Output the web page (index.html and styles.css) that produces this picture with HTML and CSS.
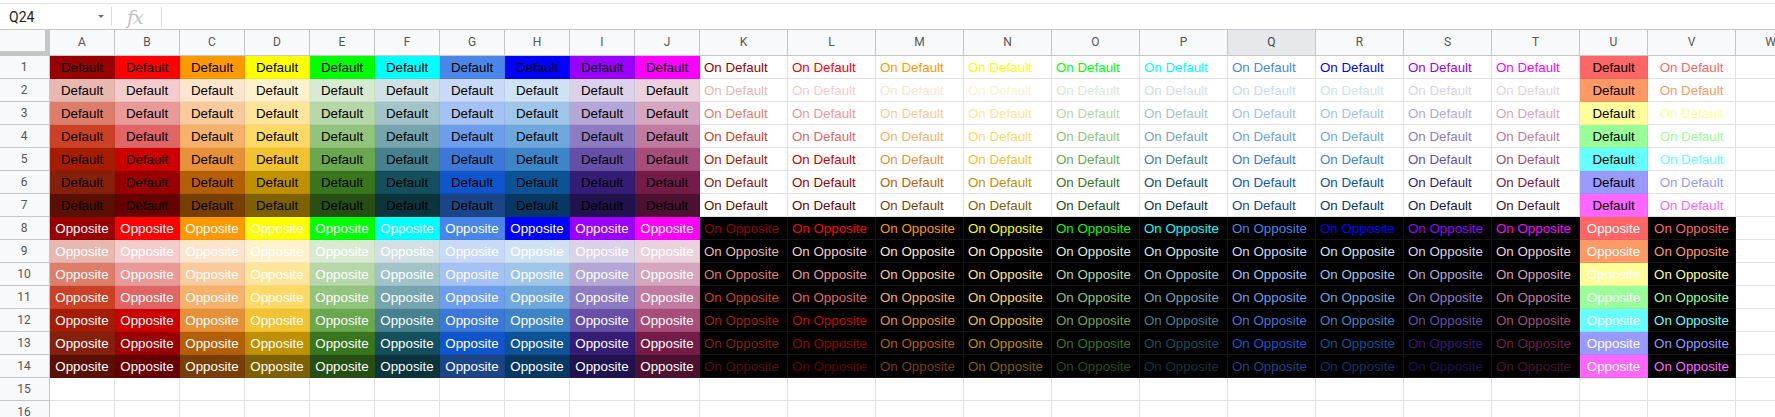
FILE: index.html
```html
<!DOCTYPE html>
<html>
<head>
<meta charset="utf-8">
<link rel="stylesheet" href="styles.css">
</head>
<body>
<div class="toolbar">
  <div class="namebox"><span class="ref">Q24</span><span class="caret"></span></div>
  <div class="sep"></div>
  <div class="fx">fx</div>
  <div class="sep"></div>
</div>
<div class="sheet">
  <div class="corner"></div>
  <div class="ch">A</div><div class="ch">B</div><div class="ch">C</div><div class="ch">D</div><div class="ch">E</div><div class="ch">F</div><div class="ch">G</div><div class="ch">H</div><div class="ch">I</div><div class="ch">J</div>
  <div class="ch">K</div><div class="ch">L</div><div class="ch">M</div><div class="ch">N</div><div class="ch">O</div><div class="ch">P</div><div class="ch sel">Q</div><div class="ch">R</div><div class="ch">S</div><div class="ch">T</div>
  <div class="ch">U</div><div class="ch">V</div><div class="ch">W</div>

  <div class="rh">1</div>
  <div class="c f p11">Default</div><div class="c f p12">Default</div><div class="c f p13">Default</div><div class="c f p14">Default</div><div class="c f p15">Default</div><div class="c f p16">Default</div><div class="c f p17">Default</div><div class="c f p18">Default</div><div class="c f p19">Default</div><div class="c f p110">Default</div>
  <div class="c k l p11">On Default</div><div class="c k l p12">On Default</div><div class="c k l p13">On Default</div><div class="c k l p14">On Default</div><div class="c k l p15">On Default</div><div class="c k l p16">On Default</div><div class="c k l p17">On Default</div><div class="c k l p18">On Default</div><div class="c k l p19">On Default</div><div class="c k l p110">On Default</div>
  <div class="c f u1">Default</div><div class="c k u1">On Default</div><div class="c"></div>

  <div class="rh">2</div>
  <div class="c f p21">Default</div><div class="c f p22">Default</div><div class="c f p23">Default</div><div class="c f p24">Default</div><div class="c f p25">Default</div><div class="c f p26">Default</div><div class="c f p27">Default</div><div class="c f p28">Default</div><div class="c f p29">Default</div><div class="c f p210">Default</div>
  <div class="c k l p21">On Default</div><div class="c k l p22">On Default</div><div class="c k l p23">On Default</div><div class="c k l p24">On Default</div><div class="c k l p25">On Default</div><div class="c k l p26">On Default</div><div class="c k l p27">On Default</div><div class="c k l p28">On Default</div><div class="c k l p29">On Default</div><div class="c k l p210">On Default</div>
  <div class="c f u2">Default</div><div class="c k u2">On Default</div><div class="c"></div>

  <div class="rh">3</div>
  <div class="c f p31">Default</div><div class="c f p32">Default</div><div class="c f p33">Default</div><div class="c f p34">Default</div><div class="c f p35">Default</div><div class="c f p36">Default</div><div class="c f p37">Default</div><div class="c f p38">Default</div><div class="c f p39">Default</div><div class="c f p310">Default</div>
  <div class="c k l p31">On Default</div><div class="c k l p32">On Default</div><div class="c k l p33">On Default</div><div class="c k l p34">On Default</div><div class="c k l p35">On Default</div><div class="c k l p36">On Default</div><div class="c k l p37">On Default</div><div class="c k l p38">On Default</div><div class="c k l p39">On Default</div><div class="c k l p310">On Default</div>
  <div class="c f u3">Default</div><div class="c k u3">On Default</div><div class="c"></div>

  <div class="rh">4</div>
  <div class="c f p41">Default</div><div class="c f p42">Default</div><div class="c f p43">Default</div><div class="c f p44">Default</div><div class="c f p45">Default</div><div class="c f p46">Default</div><div class="c f p47">Default</div><div class="c f p48">Default</div><div class="c f p49">Default</div><div class="c f p410">Default</div>
  <div class="c k l p41">On Default</div><div class="c k l p42">On Default</div><div class="c k l p43">On Default</div><div class="c k l p44">On Default</div><div class="c k l p45">On Default</div><div class="c k l p46">On Default</div><div class="c k l p47">On Default</div><div class="c k l p48">On Default</div><div class="c k l p49">On Default</div><div class="c k l p410">On Default</div>
  <div class="c f u4">Default</div><div class="c k u4">On Default</div><div class="c"></div>

  <div class="rh">5</div>
  <div class="c f p51">Default</div><div class="c f p52">Default</div><div class="c f p53">Default</div><div class="c f p54">Default</div><div class="c f p55">Default</div><div class="c f p56">Default</div><div class="c f p57">Default</div><div class="c f p58">Default</div><div class="c f p59">Default</div><div class="c f p510">Default</div>
  <div class="c k l p51">On Default</div><div class="c k l p52">On Default</div><div class="c k l p53">On Default</div><div class="c k l p54">On Default</div><div class="c k l p55">On Default</div><div class="c k l p56">On Default</div><div class="c k l p57">On Default</div><div class="c k l p58">On Default</div><div class="c k l p59">On Default</div><div class="c k l p510">On Default</div>
  <div class="c f u5">Default</div><div class="c k u5">On Default</div><div class="c"></div>

  <div class="rh">6</div>
  <div class="c f p61">Default</div><div class="c f p62">Default</div><div class="c f p63">Default</div><div class="c f p64">Default</div><div class="c f p65">Default</div><div class="c f p66">Default</div><div class="c f p67">Default</div><div class="c f p68">Default</div><div class="c f p69">Default</div><div class="c f p610">Default</div>
  <div class="c k l p61">On Default</div><div class="c k l p62">On Default</div><div class="c k l p63">On Default</div><div class="c k l p64">On Default</div><div class="c k l p65">On Default</div><div class="c k l p66">On Default</div><div class="c k l p67">On Default</div><div class="c k l p68">On Default</div><div class="c k l p69">On Default</div><div class="c k l p610">On Default</div>
  <div class="c f u6">Default</div><div class="c k u6">On Default</div><div class="c"></div>

  <div class="rh">7</div>
  <div class="c f p71">Default</div><div class="c f p72">Default</div><div class="c f p73">Default</div><div class="c f p74">Default</div><div class="c f p75">Default</div><div class="c f p76">Default</div><div class="c f p77">Default</div><div class="c f p78">Default</div><div class="c f p79">Default</div><div class="c f p710">Default</div>
  <div class="c k l p71">On Default</div><div class="c k l p72">On Default</div><div class="c k l p73">On Default</div><div class="c k l p74">On Default</div><div class="c k l p75">On Default</div><div class="c k l p76">On Default</div><div class="c k l p77">On Default</div><div class="c k l p78">On Default</div><div class="c k l p79">On Default</div><div class="c k l p710">On Default</div>
  <div class="c f u7">Default</div><div class="c k u7">On Default</div><div class="c"></div>

  <div class="rh">8</div>
  <div class="c f o p11">Opposite</div><div class="c f o p12">Opposite</div><div class="c f o p13">Opposite</div><div class="c f o p14">Opposite</div><div class="c f o p15">Opposite</div><div class="c f o p16">Opposite</div><div class="c f o p17">Opposite</div><div class="c f o p18">Opposite</div><div class="c f o p19">Opposite</div><div class="c f o p110">Opposite</div>
  <div class="c k d l p11">On Opposite</div><div class="c k d l p12">On Opposite</div><div class="c k d l p13">On Opposite</div><div class="c k d l p14">On Opposite</div><div class="c k d l p15">On Opposite</div><div class="c k d l p16">On Opposite</div><div class="c k d l p17">On Opposite</div><div class="c k d l p18">On Opposite</div><div class="c k d l p19">On Opposite</div><div class="c k d l p110">On Opposite</div>
  <div class="c f o u1">Opposite</div><div class="c k d u1">On Opposite</div><div class="c"></div>

  <div class="rh">9</div>
  <div class="c f o p21">Opposite</div><div class="c f o p22">Opposite</div><div class="c f o p23">Opposite</div><div class="c f o p24">Opposite</div><div class="c f o p25">Opposite</div><div class="c f o p26">Opposite</div><div class="c f o p27">Opposite</div><div class="c f o p28">Opposite</div><div class="c f o p29">Opposite</div><div class="c f o p210">Opposite</div>
  <div class="c k d l p21">On Opposite</div><div class="c k d l p22">On Opposite</div><div class="c k d l p23">On Opposite</div><div class="c k d l p24">On Opposite</div><div class="c k d l p25">On Opposite</div><div class="c k d l p26">On Opposite</div><div class="c k d l p27">On Opposite</div><div class="c k d l p28">On Opposite</div><div class="c k d l p29">On Opposite</div><div class="c k d l p210">On Opposite</div>
  <div class="c f o u2">Opposite</div><div class="c k d u2">On Opposite</div><div class="c"></div>

  <div class="rh">10</div>
  <div class="c f o p31">Opposite</div><div class="c f o p32">Opposite</div><div class="c f o p33">Opposite</div><div class="c f o p34">Opposite</div><div class="c f o p35">Opposite</div><div class="c f o p36">Opposite</div><div class="c f o p37">Opposite</div><div class="c f o p38">Opposite</div><div class="c f o p39">Opposite</div><div class="c f o p310">Opposite</div>
  <div class="c k d l p31">On Opposite</div><div class="c k d l p32">On Opposite</div><div class="c k d l p33">On Opposite</div><div class="c k d l p34">On Opposite</div><div class="c k d l p35">On Opposite</div><div class="c k d l p36">On Opposite</div><div class="c k d l p37">On Opposite</div><div class="c k d l p38">On Opposite</div><div class="c k d l p39">On Opposite</div><div class="c k d l p310">On Opposite</div>
  <div class="c f o u3">Opposite</div><div class="c k d u3">On Opposite</div><div class="c"></div>

  <div class="rh">11</div>
  <div class="c f o p41">Opposite</div><div class="c f o p42">Opposite</div><div class="c f o p43">Opposite</div><div class="c f o p44">Opposite</div><div class="c f o p45">Opposite</div><div class="c f o p46">Opposite</div><div class="c f o p47">Opposite</div><div class="c f o p48">Opposite</div><div class="c f o p49">Opposite</div><div class="c f o p410">Opposite</div>
  <div class="c k d l p41">On Opposite</div><div class="c k d l p42">On Opposite</div><div class="c k d l p43">On Opposite</div><div class="c k d l p44">On Opposite</div><div class="c k d l p45">On Opposite</div><div class="c k d l p46">On Opposite</div><div class="c k d l p47">On Opposite</div><div class="c k d l p48">On Opposite</div><div class="c k d l p49">On Opposite</div><div class="c k d l p410">On Opposite</div>
  <div class="c f o u4">Opposite</div><div class="c k d u4">On Opposite</div><div class="c"></div>

  <div class="rh">12</div>
  <div class="c f o p51">Opposite</div><div class="c f o p52">Opposite</div><div class="c f o p53">Opposite</div><div class="c f o p54">Opposite</div><div class="c f o p55">Opposite</div><div class="c f o p56">Opposite</div><div class="c f o p57">Opposite</div><div class="c f o p58">Opposite</div><div class="c f o p59">Opposite</div><div class="c f o p510">Opposite</div>
  <div class="c k d l p51">On Opposite</div><div class="c k d l p52">On Opposite</div><div class="c k d l p53">On Opposite</div><div class="c k d l p54">On Opposite</div><div class="c k d l p55">On Opposite</div><div class="c k d l p56">On Opposite</div><div class="c k d l p57">On Opposite</div><div class="c k d l p58">On Opposite</div><div class="c k d l p59">On Opposite</div><div class="c k d l p510">On Opposite</div>
  <div class="c f o u5">Opposite</div><div class="c k d u5">On Opposite</div><div class="c"></div>

  <div class="rh">13</div>
  <div class="c f o p61">Opposite</div><div class="c f o p62">Opposite</div><div class="c f o p63">Opposite</div><div class="c f o p64">Opposite</div><div class="c f o p65">Opposite</div><div class="c f o p66">Opposite</div><div class="c f o p67">Opposite</div><div class="c f o p68">Opposite</div><div class="c f o p69">Opposite</div><div class="c f o p610">Opposite</div>
  <div class="c k d l p61">On Opposite</div><div class="c k d l p62">On Opposite</div><div class="c k d l p63">On Opposite</div><div class="c k d l p64">On Opposite</div><div class="c k d l p65">On Opposite</div><div class="c k d l p66">On Opposite</div><div class="c k d l p67">On Opposite</div><div class="c k d l p68">On Opposite</div><div class="c k d l p69">On Opposite</div><div class="c k d l p610">On Opposite</div>
  <div class="c f o u6">Opposite</div><div class="c k d u6">On Opposite</div><div class="c"></div>

  <div class="rh">14</div>
  <div class="c f o p71">Opposite</div><div class="c f o p72">Opposite</div><div class="c f o p73">Opposite</div><div class="c f o p74">Opposite</div><div class="c f o p75">Opposite</div><div class="c f o p76">Opposite</div><div class="c f o p77">Opposite</div><div class="c f o p78">Opposite</div><div class="c f o p79">Opposite</div><div class="c f o p710">Opposite</div>
  <div class="c k d l p71">On Opposite</div><div class="c k d l p72">On Opposite</div><div class="c k d l p73">On Opposite</div><div class="c k d l p74">On Opposite</div><div class="c k d l p75">On Opposite</div><div class="c k d l p76">On Opposite</div><div class="c k d l p77">On Opposite</div><div class="c k d l p78">On Opposite</div><div class="c k d l p79">On Opposite</div><div class="c k d l p710">On Opposite</div>
  <div class="c f o u7">Opposite</div><div class="c k d u7">On Opposite</div><div class="c"></div>

  <div class="rh">15</div>
  <div class="c"></div><div class="c"></div><div class="c"></div><div class="c"></div><div class="c"></div><div class="c"></div><div class="c"></div><div class="c"></div><div class="c"></div><div class="c"></div><div class="c"></div><div class="c"></div><div class="c"></div><div class="c"></div><div class="c"></div><div class="c"></div><div class="c"></div><div class="c"></div><div class="c"></div><div class="c"></div><div class="c"></div><div class="c"></div><div class="c"></div>

  <div class="rh">16</div>
  <div class="c"></div><div class="c"></div><div class="c"></div><div class="c"></div><div class="c"></div><div class="c"></div><div class="c"></div><div class="c"></div><div class="c"></div><div class="c"></div><div class="c"></div><div class="c"></div><div class="c"></div><div class="c"></div><div class="c"></div><div class="c"></div><div class="c"></div><div class="c"></div><div class="c"></div><div class="c"></div><div class="c"></div><div class="c"></div><div class="c"></div>
</div>
</body>
</html>
```
FILE: styles.css
```css
* { box-sizing: border-box; }
html, body { margin: 0; padding: 0; background: #fff; overflow: hidden; }
body { width: 1775px; height: 417px; }

.toolbar {
  margin-top: 3px;
  height: 27px;
  border-top: 1px solid #e3e3e3;
  border-bottom: 1px solid #c4c4c4;
  display: flex;
  align-items: center;
}
.namebox {
  width: 111px;
  display: flex;
  align-items: center;
  justify-content: space-between;
  padding: 0 7px 0 9px;
}
.ref { font: 14px Roboto, sans-serif; color: #202124; }
.caret {
  width: 0; height: 0;
  border-left: 3px solid transparent;
  border-right: 3px solid transparent;
  border-top: 3px solid #6f6f6f;
}
.sep { width: 1px; height: 19px; background: #dadce0; }
.fx {
  width: 49px;
  padding-left: 15px;
  font: italic 19px "DejaVu Serif", serif;
  color: #c2c2c2;
  letter-spacing: -1px;
  line-height: 24px;
}

.sheet {
  display: grid;
  grid-template-columns: 50px repeat(10, 65px) repeat(10, 88px) 68px 88px 70px;
  grid-template-rows: 26px;
  grid-auto-rows: 23px;
  width: 1806px;
}
.corner {
  background: #f8f9fa;
  border-right: 5px solid #c4c7c5;
  border-bottom: 5px solid #c4c7c5;
}
.ch {
  background: #f8f9fa;
  border-right: 1px solid #c4c7c5;
  border-bottom: 1px solid #c4c7c5;
  font: 12px Roboto, sans-serif;
  color: #555;
  text-align: center;
  line-height: 25px;
}
.ch.sel { background: #e6e8eb; color: #444; }
.rh {
  background: #f8f9fa;
  border-right: 1px solid #c4c7c5;
  border-bottom: 1px solid #c4c7c5;
  font: 12px Roboto, sans-serif;
  color: #555;
  text-align: center;
  line-height: 22px;
  padding-right: 1px;
}
.c {
  border-right: 1px solid #e2e2e2;
  border-bottom: 1px solid #e2e2e2;
  font: 13.333px "Liberation Sans", Arial, sans-serif;
  line-height: 20px;
  padding-top: 2px;
  text-align: center;
  white-space: nowrap;
  overflow: hidden;
  color: #000;
}
.f { background: var(--c); border-color: rgba(0, 0, 0, 0.05); }
.k { color: var(--c); }
.o { color: #fff; }
.d { background: #000; border-color: #141414; }
.l { text-align: left; padding-left: 4px; }

.p11 { --c: #980000; } .p12 { --c: #ff0000; } .p13 { --c: #ff9900; } .p14 { --c: #ffff00; } .p15 { --c: #00ff00; }
.p16 { --c: #00ffff; } .p17 { --c: #4a86e8; } .p18 { --c: #0000ff; } .p19 { --c: #9900ff; } .p110 { --c: #ff00ff; }
.p21 { --c: #e6b8af; } .p22 { --c: #f4cccc; } .p23 { --c: #fce5cd; } .p24 { --c: #fff2cc; } .p25 { --c: #d9ead3; }
.p26 { --c: #d0e0e3; } .p27 { --c: #c9daf8; } .p28 { --c: #cfe2f3; } .p29 { --c: #d9d2e9; } .p210 { --c: #ead1dc; }
.p31 { --c: #dd7e6b; } .p32 { --c: #ea9999; } .p33 { --c: #f9cb9c; } .p34 { --c: #ffe599; } .p35 { --c: #b6d7a8; }
.p36 { --c: #a2c4c9; } .p37 { --c: #a4c2f4; } .p38 { --c: #9fc5e8; } .p39 { --c: #b4a7d6; } .p310 { --c: #d5a6bd; }
.p41 { --c: #cc4125; } .p42 { --c: #e06666; } .p43 { --c: #f6b26b; } .p44 { --c: #ffd966; } .p45 { --c: #93c47d; }
.p46 { --c: #76a5af; } .p47 { --c: #6d9eeb; } .p48 { --c: #6fa8dc; } .p49 { --c: #8e7cc3; } .p410 { --c: #c27ba0; }
.p51 { --c: #a61c00; } .p52 { --c: #cc0000; } .p53 { --c: #e69138; } .p54 { --c: #f1c232; } .p55 { --c: #6aa84f; }
.p56 { --c: #45818e; } .p57 { --c: #3c78d8; } .p58 { --c: #3d85c6; } .p59 { --c: #674ea7; } .p510 { --c: #a64d79; }
.p61 { --c: #85200c; } .p62 { --c: #990000; } .p63 { --c: #b45f06; } .p64 { --c: #bf9000; } .p65 { --c: #38761d; }
.p66 { --c: #134f5c; } .p67 { --c: #1155cc; } .p68 { --c: #0b5394; } .p69 { --c: #351c75; } .p610 { --c: #741b47; }
.p71 { --c: #5b0f00; } .p72 { --c: #660000; } .p73 { --c: #783f04; } .p74 { --c: #7f6000; } .p75 { --c: #274e13; }
.p76 { --c: #0c343d; } .p77 { --c: #1c4587; } .p78 { --c: #073763; } .p79 { --c: #20124d; } .p710 { --c: #4c1130; }

.u1 { --c: #ff6666; } .u2 { --c: #ff9966; } .u3 { --c: #ffff99; } .u4 { --c: #99ff99; }
.u5 { --c: #66ffff; } .u6 { --c: #9999ff; } .u7 { --c: #ff66ff; }
```
